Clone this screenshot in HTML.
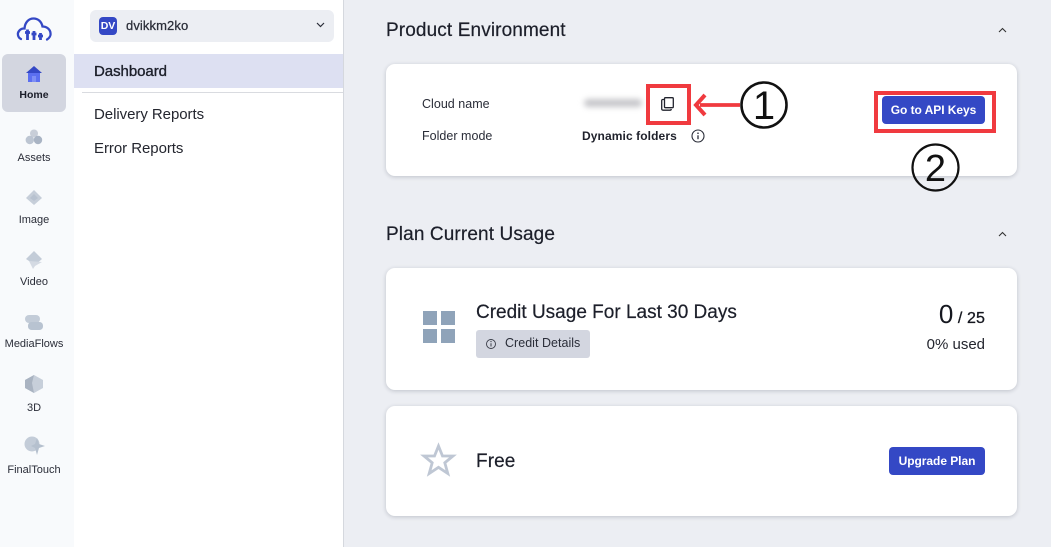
<!DOCTYPE html>
<html><head><meta charset="utf-8"><style>
html,body{margin:0;padding:0}
body{width:1051px;height:547px;overflow:hidden;position:relative;background:#eceef3;font-family:"Liberation Sans",sans-serif;color:#1a1d29}
.a{position:absolute;white-space:nowrap}
.rail{position:absolute;left:0;top:0;width:74px;height:547px;background:#f8fafc}
.side{position:absolute;left:74px;top:0;width:269px;height:547px;background:#fff;border-right:1px solid #d5d8de}
.rl{position:absolute;left:0;width:68px;text-align:center;font-size:11px;letter-spacing:0;color:#2a2d38;white-space:nowrap}
.card{position:absolute;left:386px;width:631px;background:#fff;border-radius:9px;box-shadow:0 1px 4px rgba(30,40,60,.22)}
.btn{position:absolute;background:#3448c5;color:#fff;border-radius:4px;font-weight:bold;font-size:12px;text-align:center;letter-spacing:-.05px}
.h{font-size:19px;letter-spacing:.12px;color:#1c1f2a;-webkit-text-stroke:.2px #1c1f2a}
.nav{font-size:15px;letter-spacing:-.05px;color:#24262f}
.sm{font-size:12.5px;letter-spacing:.02px;color:#2a2d38}
svg{position:absolute;overflow:visible}
</style></head><body>
<div class="rail"></div>
<div class="side"></div>
<svg style="left:16px;top:16px" width="36" height="26" viewBox="0 0 36 26" fill="none">
<path d="M5 23C1.800 21.500 1 17.500 3 15C4.500 13 6.500 12.300 8.500 12.500C9 6 13 2.500 17.500 2.500C22 2.500 25.500 5.500 26.500 10.500C30.500 10.500 34 13 34.500 17C35 19.500 33.500 22 31 23.500" stroke="#3448c5" stroke-width="2.300" stroke-linecap="round"/>
<path d="M11.500 24V13.500M9 16.500H14M18 24V15M15.500 18H20.500M24.500 24V17M22 20H27" stroke="#3448c5" stroke-width="2.800"/>
</svg>
<div class="a" style="left:2px;top:54px;width:64px;height:58px;background:#d3d6e0;border-radius:6px"></div>
<svg style="left:25px;top:65px" width="18" height="18" viewBox="0 0 18 18"><path d="M9 1L17 8H1Z" fill="#3448c5"/><rect x="3" y="8" width="12" height="9" fill="#5b6ff0"/><rect x="7" y="11" width="4" height="6" fill="#7d8ef5"/></svg>
<div class="rl" style="top:89px;font-weight:bold;font-size:10.5px;color:#1a1d29">Home</div>
<svg style="left:25px;top:128px" width="18" height="18" viewBox="0 0 18 18"><circle cx="9" cy="5.500" r="4" fill="#c8ced8"/><circle cx="4.800" cy="12" r="4.200" fill="#bcc5d2"/><circle cx="13" cy="12" r="4.200" fill="#a9b4c4"/></svg>
<div class="rl" style="top:152px">Assets</div>
<svg style="left:25px;top:190px" width="18" height="16" viewBox="0 0 18 16"><path d="M9 0L17 8L9 15L1 8Z" fill="#c6ced9"/><path d="M9 4L13 8L9 11L5 8Z" fill="#b8c2d0"/></svg>
<div class="rl" style="top:214px">Image</div>
<svg style="left:25px;top:251px" width="18" height="18" viewBox="0 0 18 18"><path d="M9 0L17 8L10 14L1 8Z" fill="#c3ccd8"/><path d="M4 10L17 11L10 15L8 18Z" fill="#d4dae3"/></svg>
<div class="rl" style="top:276px">Video</div>
<svg style="left:25px;top:314px" width="18" height="18" viewBox="0 0 18 18"><rect x="0" y="1" width="15" height="8" rx="4" fill="#c3ccd8"/><rect x="3" y="8" width="15" height="8" rx="3.500" fill="#b8c3d1"/></svg>
<div class="rl" style="top:338px">MediaFlows</div>
<svg style="left:25px;top:375px" width="18" height="18" viewBox="0 0 18 18"><path d="M9 0L18 5V13L9 18L0 13V5Z" fill="#c7cfda"/><path d="M9 0L0 5V13L9 18L7 8Z" fill="#a9b3c1"/></svg>
<div class="rl" style="top:402px">3D</div>
<svg style="left:24px;top:436px" width="22" height="20" viewBox="0 0 22 20"><circle cx="8" cy="8" r="7.500" fill="#c3ccd8"/><path d="M13 2L15 8L21 10L15 12L13 19L11 12L7 10L11 8Z" fill="#b5c0ce"/></svg>
<div class="rl" style="top:464px">FinalTouch</div>

<div class="a" style="left:90px;top:10px;width:244px;height:32px;background:#eceef3;border-radius:6px"></div>
<div class="a" style="left:99px;top:17px;width:18px;height:18px;background:#3448c5;border-radius:4px;color:#fff;font-size:10.5px;line-height:18px;text-align:center;font-weight:bold">DV</div>
<div class="a" style="left:126px;top:18px;font-size:13px;letter-spacing:.1px;-webkit-text-stroke:.25px #2a2d38;color:#2a2d38;line-height:15px">dvikkm2ko</div>
<svg style="left:316px;top:22px" width="9" height="6" viewBox="0 0 9 6" fill="none"><path d="M1 1L4.500 4.500L8 1" stroke="#2a2d38" stroke-width="1.200"/></svg>
<div class="a" style="left:74px;top:54px;width:269px;height:34px;background:#dde0f2"></div>
<div class="a nav" style="left:94px;top:64px;-webkit-text-stroke:.35px #1c1f2a;color:#1c1f2a;line-height:16px">Dashboard</div>
<div class="a" style="left:82px;top:92px;width:261px;height:1px;background:#d9dbe0"></div>
<div class="a nav" style="left:94px;top:107px;line-height:16px">Delivery Reports</div>
<div class="a nav" style="left:94px;top:141px;line-height:16px">Error Reports</div>

<div class="a h" style="left:386px;top:20px;line-height:21px">Product Environment</div>
<svg style="left:998px;top:27px" width="9" height="6" viewBox="0 0 9 6" fill="none"><path d="M1 5L4.500 1.500L8 5" stroke="#333" stroke-width="1.100"/></svg>
<div class="card" style="top:64px;height:112px"></div>
<div class="a sm" style="left:422px;top:97px;line-height:15px">Cloud name</div>
<div class="a sm" style="left:422px;top:129px;line-height:15px">Folder mode</div>
<div class="a" style="left:584px;top:99px;width:58px;height:8px;background:#c6c6ca;border-radius:4px;filter:blur(3px)"></div>
<div class="a" style="left:582px;top:129px;font-size:12px;font-weight:bold;letter-spacing:.1px;line-height:15px;color:#1f212b">Dynamic folders</div>
<svg style="left:691px;top:129px" width="14" height="14" viewBox="0 0 14 14" fill="none"><circle cx="7" cy="7" r="6" stroke="#2a2d38" stroke-width="1.100"/><path d="M7 6.300V10.200" stroke="#2a2d38" stroke-width="1.300"/><circle cx="7" cy="4.200" r=".8" fill="#2a2d38"/></svg>
<svg style="left:661px;top:97px" width="13" height="14" viewBox="0 0 13 14" fill="none"><rect x="3.500" y=".7" width="8.800" height="10" rx="1" stroke="#22242e" stroke-width="1.300"/><path d="M3.500 2.500H1.800C1.100 2.500.7 3 .7 3.600V11.800C.7 12.600 1.200 13.200 2 13.200H9C9.700 13.200 10.200 12.800 10.300 12" stroke="#22242e" stroke-width="1.300"/></svg>
<div class="a" style="left:646px;top:84px;width:45px;height:41px;box-sizing:border-box;border:4px solid #f03a3f"></div>
<svg style="left:690px;top:80px" width="100" height="50" viewBox="0 0 100 50" fill="none">
<path d="M50 25H10" stroke="#f03a3f" stroke-width="3.800"/><path d="M15 15L6 25L15 35" stroke="#f03a3f" stroke-width="4"/>
<circle cx="74" cy="25" r="22.500" stroke="#111" stroke-width="2.600"/>
<text x="74" y="39" text-anchor="middle" font-family="Liberation Sans" font-size="40" fill="#111">1</text>
</svg>
<div class="a" style="left:874px;top:91px;width:122px;height:42px;box-sizing:border-box;border:4px solid #f03a3f"></div>
<div class="btn" style="left:882px;top:96px;width:103px;height:28px;line-height:28px">Go to API Keys</div>
<svg style="left:911px;top:143px" width="50" height="50" viewBox="0 0 50 50" fill="none">
<circle cx="24.500" cy="24.500" r="23" stroke="#111" stroke-width="2.200"/>
<text x="24.500" y="38" text-anchor="middle" font-family="Liberation Sans" font-size="38" fill="#111">2</text>
</svg>

<div class="a h" style="left:386px;top:224px;line-height:21px">Plan Current Usage</div>
<svg style="left:998px;top:231px" width="9" height="6" viewBox="0 0 9 6" fill="none"><path d="M1 5L4.500 1.500L8 5" stroke="#333" stroke-width="1.100"/></svg>
<div class="card" style="top:268px;height:122px"></div>
<div class="a" style="left:423px;top:311px;width:14px;height:14px;background:#8fa3b9"></div>
<div class="a" style="left:441px;top:311px;width:14px;height:14px;background:#8fa3b9"></div>
<div class="a" style="left:423px;top:329px;width:14px;height:14px;background:#8fa3b9"></div>
<div class="a" style="left:441px;top:329px;width:14px;height:14px;background:#8fa3b9"></div>
<div class="a" style="left:476px;top:302px;font-size:19px;letter-spacing:0;-webkit-text-stroke:.2px #1c1f2a;line-height:21px;color:#1c1f2a">Credit Usage For Last 30 Days</div>
<div class="a" style="left:476px;top:330px;width:114px;height:28px;background:#d3d6e0;border-radius:3px"></div>
<svg style="left:485px;top:338px" width="12" height="12" viewBox="0 0 12 12" fill="none"><circle cx="6" cy="6" r="4.500" stroke="#3a3d48" stroke-width=".9"/><path d="M6 5.300V8.500" stroke="#3a3d48"/><circle cx="6" cy="3.600" r=".6" fill="#3a3d48"/></svg>
<div class="a sm" style="left:505px;top:336px;line-height:15px">Credit Details</div>
<div class="a" style="right:66px;top:300px;line-height:28px;color:#15171f"><span style="font-size:26px">0</span><span style="font-size:16px;-webkit-text-stroke:.3px #15171f;letter-spacing:.1px"> / 25</span></div>
<div class="a" style="right:66px;top:337px;font-size:15px;letter-spacing:0;line-height:16px;color:#24262f">0% used</div>

<div class="card" style="top:406px;height:110px"></div>
<svg style="left:422px;top:443px" width="34" height="34" viewBox="0 0 34 34" fill="none"><path d="M16.500 3L20.500 13H31L22.800 19.800L25.800 30.500L16.500 24.300L7.200 30.500L10.200 19.800L2 13H12.500Z" stroke="#bfc7d4" stroke-width="2.800"/></svg>
<div class="a" style="left:476px;top:451px;font-size:19px;letter-spacing:.1px;-webkit-text-stroke:.2px #1c1f2a;line-height:21px;color:#1c1f2a">Free</div>
<div class="btn" style="left:889px;top:447px;width:96px;height:28px;line-height:28px">Upgrade Plan</div>
</body></html>
